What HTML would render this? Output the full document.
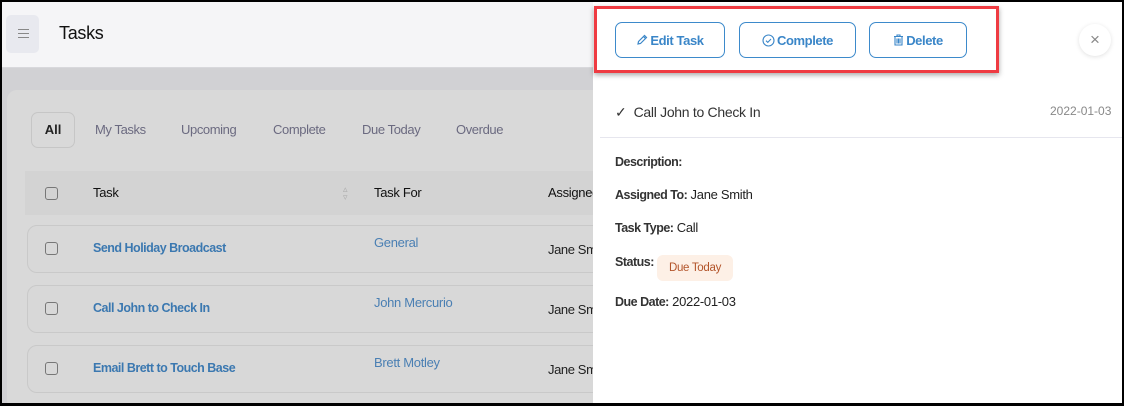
<!DOCTYPE html>
<html><head><style>
*{box-sizing:border-box;margin:0;padding:0}
body{width:1124px;height:406px;background:#000;font-family:"Liberation Sans",sans-serif;overflow:hidden;position:relative}
.frame{position:absolute;left:2px;top:2px;width:1120px;height:401px;background:#d1d1d4;overflow:hidden}
.abs{position:absolute}
.hdr{left:0;top:0;width:1120px;height:66px;background:#f5f5f7;border-bottom:1px solid #d8d8dc}
.tab{top:120px;font-size:13px;color:#6b6a80;letter-spacing:-0.4px}
.row{left:25px;width:600px;height:48px;border:1px solid #c9c9c9;border-radius:10px;background:#d8d8d8}
.cb{width:13px;height:13px;border:1px solid #777;border-radius:3px}
.lnk{color:#3b78b0;font-size:12.5px;font-weight:bold;letter-spacing:-0.5px}
.for{color:#4a7fb3;font-size:13px;letter-spacing:-0.3px}
.js{font-size:13px;color:#222;letter-spacing:-0.4px}
.panel{left:591px;top:0;width:529px;height:401px;background:#fff}
.btn{top:20px;height:36px;border:1px solid #3d8acb;border-radius:7px;color:#3a86c8;font-weight:bold;font-size:13px;display:flex;align-items:center;justify-content:center;gap:2px;letter-spacing:-0.4px}
.lab{left:22px;font-size:13px;color:#222;letter-spacing:-0.3px}
.lab b{font-weight:bold;color:#333;font-size:12.5px;letter-spacing:-0.5px}
</style></head><body><div class="frame">
<div class="abs hdr"></div>
<div class="abs" style="left:4px;top:13px;width:33px;height:38px;background:#e8e9ef;border-radius:5px"></div>
<div class="abs" style="left:16px;top:27px;width:11px;height:1px;background:#888;box-shadow:0 4px 0 #888,0 8px 0 #888"></div>
<div class="abs" style="left:57px;top:21px;font-size:18px;color:#111;letter-spacing:-0.3px">Tasks</div>
<div class="abs" style="left:5px;top:88px;width:600px;height:320px;background:#d9d9d9;border-radius:10px"></div>
<div class="abs" style="left:29px;top:110px;width:44px;height:36px;border:1px solid #c6c6c6;border-radius:7px;font-size:13px;font-weight:bold;color:#222;text-align:center;line-height:34px">All</div>
<div class="abs tab" style="left:93px">My Tasks</div>
<div class="abs tab" style="left:179px">Upcoming</div>
<div class="abs tab" style="left:271px">Complete</div>
<div class="abs tab" style="left:360px">Due Today</div>
<div class="abs tab" style="left:454px">Overdue</div>
<div class="abs" style="left:23px;top:169px;width:580px;height:44px;background:#d3d3d3"></div>
<div class="abs cb" style="left:43px;top:185px"></div>
<div class="abs" style="left:91px;top:183px;font-size:13px;color:#111;letter-spacing:-0.3px">Task</div>
<div class="abs" style="left:341px;top:183px;font-size:9px;color:#aaa;line-height:8px">▵<br>▿</div>
<div class="abs" style="left:372px;top:183px;font-size:13px;color:#111;letter-spacing:-0.3px">Task For</div>
<div class="abs" style="left:546px;top:183px;font-size:13px;color:#111;letter-spacing:-0.3px">Assigned</div>
<div class="abs row" style="top:223px"></div>
<div class="abs row" style="top:283px"></div>
<div class="abs row" style="top:343px"></div>
<div class="abs cb" style="left:43px;top:240px"></div>
<div class="abs cb" style="left:43px;top:300px"></div>
<div class="abs cb" style="left:43px;top:360px"></div>
<div class="abs lnk" style="left:91px;top:239px">Send Holiday Broadcast</div>
<div class="abs lnk" style="left:91px;top:299px">Call John to Check In</div>
<div class="abs lnk" style="left:91px;top:359px">Email Brett to Touch Base</div>
<div class="abs for" style="left:372px;top:233px">General</div>
<div class="abs for" style="left:372px;top:293px">John Mercurio</div>
<div class="abs for" style="left:372px;top:353px">Brett Motley</div>
<div class="abs js" style="left:546px;top:240px">Jane Smith</div>
<div class="abs js" style="left:546px;top:300px">Jane Smith</div>
<div class="abs js" style="left:546px;top:360px">Jane Smith</div>

<div class="abs panel">
 <div class="abs" style="left:1px;top:4px;width:405px;height:67px;border:3px solid #ef3b42;box-shadow:0 2px 5px rgba(0,0,0,.35)"></div>
 <div class="abs btn" style="left:22px;width:110px"><svg width="12" height="12" viewBox="0 0 12 12"><path d="M2 10 L2.5 7.5 L8.5 1.5 L10.5 3.5 L4.5 9.5 Z M7.5 2.5 L9.5 4.5" fill="none" stroke="#3a86c8" stroke-width="1.2"/></svg>Edit Task</div>
 <div class="abs btn" style="left:146px;width:117px"><svg width="13" height="13" viewBox="0 0 13 13"><circle cx="6.5" cy="6.5" r="5.5" fill="none" stroke="#3a86c8" stroke-width="1.1"/><path d="M4 6.7 L5.8 8.4 L9 5" fill="none" stroke="#3a86c8" stroke-width="1.1"/></svg>Complete</div>
 <div class="abs btn" style="left:276px;width:98px"><svg width="11" height="12" viewBox="0 0 11 12"><path d="M1 2.5h9M4 2.5V1h3v1.5M2 2.5v8.5h7V2.5M4 4.5v5M5.5 4.5v5M7 4.5v5" fill="none" stroke="#3a86c8" stroke-width="1.1"/></svg>Delete</div>
 <div class="abs" style="left:486px;top:22px;width:32px;height:32px;border-radius:50%;background:#fff;box-shadow:0 1px 5px rgba(0,0,0,.12);text-align:center;line-height:31px;color:#888;font-size:17px">×</div>
 <div class="abs" style="left:22px;top:102px;font-size:14px;color:#333;letter-spacing:-0.3px">✓&nbsp; Call John to Check In</div>
 <div class="abs" style="left:457px;top:102px;font-size:12px;color:#888">2022-01-03</div>
 <div class="abs" style="left:7px;top:135px;width:522px;height:1px;background:#e6e6ee"></div>
 <div class="abs lab" style="top:152px"><b>Description:</b></div>
 <div class="abs lab" style="top:185px"><b>Assigned To:</b> Jane Smith</div>
 <div class="abs lab" style="top:218px"><b>Task Type:</b> Call</div>
 <div class="abs lab" style="top:252px"><b>Status:</b></div>
 <div class="abs" style="left:64px;top:253px;width:76px;height:26px;background:#fdf0e6;border-radius:6px;color:#b3552b;font-size:11.5px;text-align:center;line-height:26px;letter-spacing:-0.3px">Due Today</div>
 <div class="abs lab" style="top:292px"><b>Due Date:</b> 2022-01-03</div>
</div>
</div></body></html>
